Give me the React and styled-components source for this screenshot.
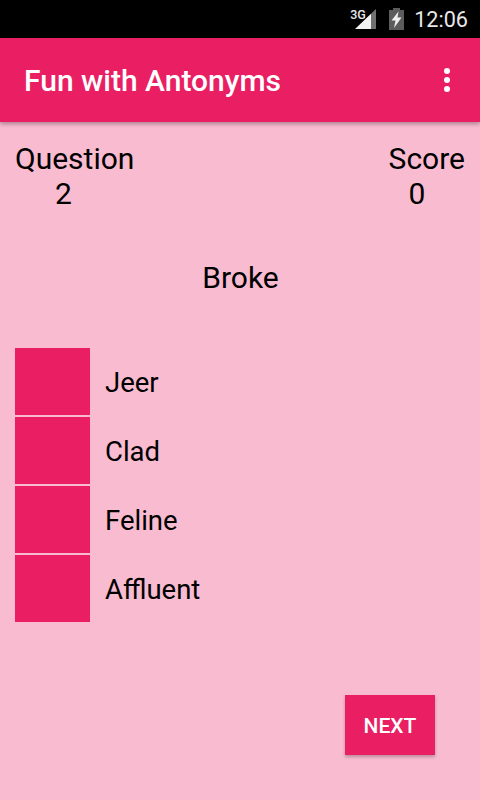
import React from 'react'
import styled, { createGlobalStyle } from 'styled-components'

const GlobalStyle = createGlobalStyle`
  html, body { margin: 0; padding: 0; }
  body { width: 480px; height: 800px; overflow: hidden; font-family: Roboto, "Liberation Sans", sans-serif; }
`

const Screen = styled.div`
  width: 480px;
  height: 800px;
  display: flex;
  flex-direction: column;
  background: #f8bbd0;
  color: #000;
`

const StatusBar = styled.div`
  height: 38px;
  flex: none;
  background: #000;
  display: flex;
  align-items: center;
  justify-content: flex-end;
  padding-right: 12px;
  box-sizing: border-box;
`

const Clock = styled.span`
  color: #e8e8e8;
  font-size: 21.6px;
  margin-left: 10px;
`

const AppBar = styled.header`
  height: 84px;
  flex: none;
  background: #e91e63;
  box-shadow: 0 2px 4px rgba(0, 0, 0, 0.3);
  display: flex;
  align-items: center;
  justify-content: space-between;
  padding: 0 30px 0 24px;
  position: relative;
`

const Title = styled.h1`
  margin: 0;
  font-size: 30px;
  font-weight: 500;
  color: #fff;
`

const Overflow = styled.div`
  display: flex;
  flex-direction: column;
  gap: 3px;
`

const Dot = styled.span`
  width: 6px;
  height: 6px;
  border-radius: 50%;
  background: #fff;
`

const Content = styled.main`
  flex: 1;
  display: flex;
  flex-direction: column;
  padding: 19px 15px 0;
`

const Stats = styled.div`
  display: flex;
  justify-content: space-between;
`

const Stat = styled.div`
  display: flex;
  flex-direction: column;
  font-size: 30px;
  line-height: 35px;
`

const StatValue = styled.span`
  padding-left: ${p => p.$indent}px;
`

const Word = styled.div`
  margin-top: 49px;
  text-align: center;
  font-size: 30px;
  line-height: 35px;
  padding-left: 1px;
`

const Options = styled.div`
  margin-top: 53px;
  display: flex;
  flex-direction: column;
  gap: 2px;
`

const Option = styled.div`
  display: flex;
  align-items: center;
  gap: 15px;
  font-size: 27.5px;
`

const OptionLabel = styled.span`
  padding-top: 2px;
`

const Swatch = styled.div`
  width: 75px;
  height: 67px;
  background: #e91e63;
`

const Footer = styled.div`
  margin-top: 73px;
  display: flex;
  justify-content: flex-end;
  padding-right: 30px;
`

const NextButton = styled.button`
  width: 90px;
  height: 60px;
  border: 0;
  padding: 2px 0 0;
  background: #e91e63;
  color: #fff;
  font-family: inherit;
  font-size: 21px;
  font-weight: 500;
  box-shadow: 0 2px 3px rgba(0, 0, 0, 0.25);
`

const SignalBox = styled.div`
  position: relative;
  width: 26px;
  height: 22px;
  margin-right: 13px;
`

const NetworkLabel = styled.span`
  position: absolute;
  left: 0;
  top: 1px;
  color: #e8e8e8;
  font-size: 12.5px;
  font-weight: 500;
  line-height: 11px;
`

const SignalIcon = () => (
  <SignalBox>
    <svg width="26" height="22" viewBox="0 0 26 22">
      <path d="M5 21 L21 5.8 V21 Z" fill="#f2f2f2" />
      <path d="M21 5.8 L26 1 V21 H21 Z" fill="#707070" />
    </svg>
    <NetworkLabel>3G</NetworkLabel>
  </SignalBox>
)

const BatteryIcon = () => (
  <svg width="15" height="22" viewBox="0 0 15 22">
    <path d="M4 0 H11 V2 H15 V22 H0 V2 H4 Z" fill="#5c5c5c" />
    <path d="M9.5 3.5 L2.5 12.5 H6.5 L5 20 L12.5 9.5 H8.5 Z" fill="#f0f0f0" />
  </svg>
)

const options = ['Jeer', 'Clad', 'Feline', 'Affluent']

export default function App() {
  return (
    <Screen>
      <GlobalStyle />
      <StatusBar>
        <SignalIcon />
        <BatteryIcon />
        <Clock>12:06</Clock>
      </StatusBar>
      <AppBar>
        <Title>Fun with Antonyms</Title>
        <Overflow>
          <Dot />
          <Dot />
          <Dot />
        </Overflow>
      </AppBar>
      <Content>
        <Stats>
          <Stat>
            Question
            <StatValue $indent={40}>2</StatValue>
          </Stat>
          <Stat>
            Score
            <StatValue $indent={20}>0</StatValue>
          </Stat>
        </Stats>
        <Word>Broke</Word>
        <Options>
          {options.map(o => (
            <Option key={o}>
              <Swatch />
              <OptionLabel>{o}</OptionLabel>
            </Option>
          ))}
        </Options>
        <Footer>
          <NextButton>NEXT</NextButton>
        </Footer>
      </Content>
    </Screen>
  )
}
